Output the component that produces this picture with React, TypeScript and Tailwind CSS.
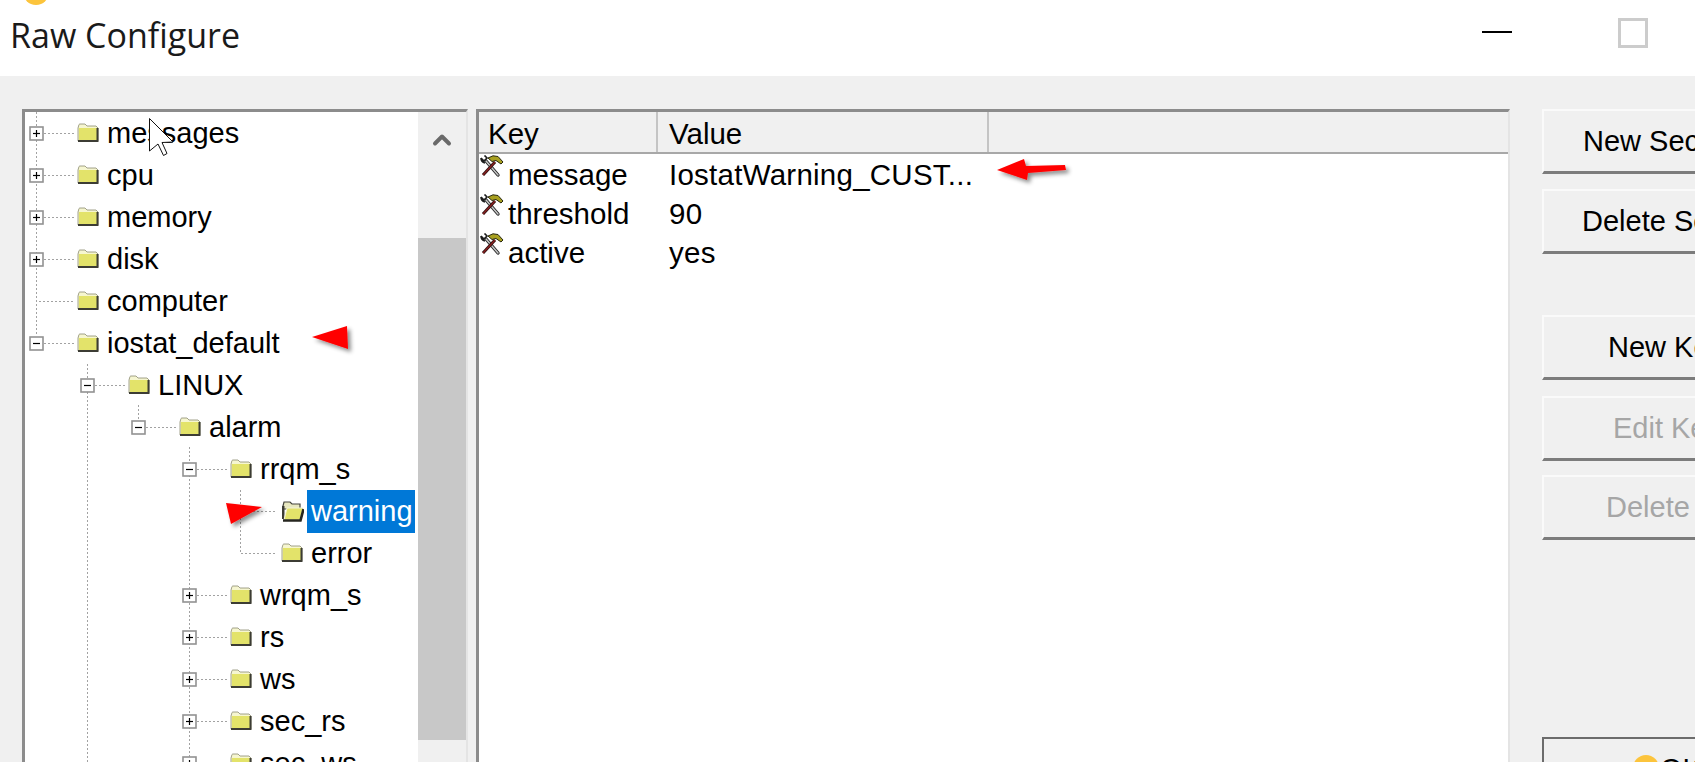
import { ChevronUp } from 'lucide-react';

// ---- data ----

interface TreeRow {
  label: string;
  level: number;
  open?: boolean;
  selected?: boolean;
}

const ROW_INDENT = ['pl-[52px]', 'pl-[103px]', 'pl-[154px]', 'pl-[205px]', 'pl-[256px]'];

const TREE_ROWS: TreeRow[] = [
  { label: 'messages', level: 0 },
  { label: 'cpu', level: 0 },
  { label: 'memory', level: 0 },
  { label: 'disk', level: 0 },
  { label: 'computer', level: 0 },
  { label: 'iostat_default', level: 0 },
  { label: 'LINUX', level: 1 },
  { label: 'alarm', level: 2 },
  { label: 'rrqm_s', level: 3 },
  { label: 'warning', level: 4, open: true, selected: true },
  { label: 'error', level: 4 },
  { label: 'wrqm_s', level: 3 },
  { label: 'rs', level: 3 },
  { label: 'ws', level: 3 },
  { label: 'sec_rs', level: 3 },
  { label: 'sec_ws', level: 3 },
];

// box positions in the tree: [center x, center y, expanded]
const TREE_BOXES: [number, number, boolean][] = [
  [11, 21, false],
  [11, 63, false],
  [11, 105, false],
  [11, 147, false],
  [11, 231, true],
  [62, 273, true],
  [113, 315, true],
  [164, 357, true],
  [164, 483, false],
  [164, 525, false],
  [164, 567, false],
  [164, 609, false],
  [164, 651, false],
];

const KEY_ROWS = [
  { key: 'message', value: 'IostatWarning_CUST...' },
  { key: 'threshold', value: '90' },
  { key: 'active', value: 'yes' },
];

// ---- drawings ----

function Folder({ open }: { open?: boolean }) {
  if (open) {
    return (
      <svg width="23" height="21" viewBox="0 0 23 21" className="shrink-0">
        <path d="M2 5 L3 1 H9 L11 3 H19 V8 H2 Z" fill="#e8e8c0" stroke="#44443c" strokeWidth="1.2" />
        <path d="M1 18 V5 L3.5 5 V18 Z" fill="#3c3c34" />
        <path d="M6 7 H22 L19 19 H3 Z" fill="#e3e36a" stroke="#f4f4d8" strokeWidth="1" />
        <path d="M2 19.5 H19.5 L22.5 8" fill="none" stroke="#26261f" strokeWidth="2.6" />
      </svg>
    );
  }
  return (
    <svg width="22" height="20" viewBox="0 0 22 20" className="shrink-0">
      <path d="M1 5 L2 1.5 Q2.5 1 3 1 H8 L10 3 H19 L21 5 V18 H1 Z" fill="#f6f6d0" stroke="#8a8a70" strokeWidth="0.8" />
      <rect x="2" y="5" width="18" height="12" fill="#e3e36a" />
      <path d="M1 18 H20.5 V5" fill="none" stroke="#3c3c34" strokeWidth="2" />
    </svg>
  );
}

function Tools() {
  return (
    <svg width="25" height="25" viewBox="0 0 25 25" className="shrink-0">
      <path d="M6 6 L18 20" stroke="#2a2a2a" strokeWidth="3.4" strokeLinecap="round" />
      <path d="M6 6 L18 20" stroke="#c8c8c8" strokeWidth="1.4" strokeLinecap="round" />
      <path d="M1 3 L4 6 L7 3 L4.5 0.5 M1 3 Q1 7 5 8" fill="none" stroke="#1c1c1c" strokeWidth="1.6" />
      <path d="M3 20 L15 7" stroke="#2c1010" strokeWidth="3" />
      <path d="M3 20 L15 7" stroke="#8a2020" strokeWidth="1.3" />
      <path d="M8 3 L13 0.8 L18 1.5 L23 7 L21 9 L16 5.5 L12 6.5 Z" fill="#a8a020" stroke="#26260e" strokeWidth="1" />
    </svg>
  );
}

function TreeLines() {
  const dot = { stroke: '#a2a2a2', strokeWidth: 1, strokeDasharray: '2 2' };
  return (
    <svg width="393" height="650" className="pointer-events-none absolute left-0 top-0">
      <line x1="11.5" y1="0" x2="11.5" y2="224" {...dot} />
      <line x1="62.5" y1="252" x2="62.5" y2="650" {...dot} />
      <line x1="113.5" y1="293" x2="113.5" y2="308" {...dot} />
      <line x1="164.5" y1="335" x2="164.5" y2="650" {...dot} />
      <line x1="215.5" y1="378" x2="215.5" y2="441" {...dot} />
      <line x1="14" y1="189.5" x2="49" y2="189.5" {...dot} />
      <line x1="216" y1="399.5" x2="252" y2="399.5" {...dot} />
      <line x1="216" y1="441.5" x2="252" y2="441.5" {...dot} />
      {TREE_BOXES.map(([x, y]) => (
        <line key={`${x}-${y}`} x1={x + 8} y1={y + 0.5} x2={x + 38} y2={y + 0.5} {...dot} />
      ))}
      {TREE_BOXES.map(([x, y, expanded]) => (
        <g key={`${x}-${y}-box`}>
          <rect x={x - 6} y={y - 6} width="13" height="13" fill="#fff" stroke="#929292" strokeWidth="1.6" />
          <line x1={x - 3} y1={y + 0.5} x2={x + 4} y2={y + 0.5} stroke="#000" strokeWidth="1.2" />
          {!expanded && <line x1={x + 0.5} y1={y - 3} x2={x + 0.5} y2={y + 4} stroke="#000" strokeWidth="1.2" />}
        </g>
      ))}
    </svg>
  );
}

// red annotation arrows and the mouse pointer lie on top of the window
function Annotations() {
  return (
    <svg width="1695" height="762" className="pointer-events-none absolute left-0 top-0">
      <defs>
        <filter id="soft" x="-30%" y="-30%" width="170%" height="170%">
          <feDropShadow dx="3" dy="3" stdDeviation="2" floodColor="#000" floodOpacity="0.45" />
        </filter>
      </defs>
      <path d="M312 337 L347 326 L348 349 Z" fill="#ff0000" filter="url(#soft)" />
      <path d="M226 503 L262 507 L231 524 Z" fill="#ff0000" filter="url(#soft)" />
      <path d="M997 170 L1024 159 L1026 166 L1065 165 L1066 170 L1028 173 L1027 180 Z" fill="#ff0000" filter="url(#soft)" />
      <path
        d="M149.5 118.5 V151 L158 144 L163.5 155.5 L167 153.5 L162 142.5 L173 142 Z"
        fill="#fff"
        stroke="#111"
        strokeWidth="1"
      />
    </svg>
  );
}

// ---- panels ----

function Tree() {
  return (
    <div className="flex h-full w-[446px] shrink-0 border-l-[3px] border-t-[3px] border-[#8c8c8c] border-r-2 border-r-[#e4e4e4] bg-white">
      <div className="relative w-[393px] shrink-0 overflow-hidden">
        {TREE_ROWS.map((row) => (
          <div key={row.label} className={`flex h-[42px] items-center ${ROW_INDENT[row.level]}`}>
            <Folder open={row.open} />
            <span
              className={`flex h-[43px] items-center whitespace-nowrap pt-[2px] ${
                row.selected ? 'ml-[3px] bg-[#0078d7] pl-1 pr-[2px] text-white' : 'ml-1 px-1 text-black'
              }`}
            >
              {row.label}
            </span>
          </div>
        ))}
        <TreeLines />
      </div>
      <div className="flex w-[48px] shrink-0 flex-col bg-[#f0f0f0]">
        <div className="flex h-[126px] shrink-0 justify-center pt-[14px] text-[#6a6a6a]">
          <ChevronUp size={28} strokeWidth={3.4} />
        </div>
        <div className="h-[502px] shrink-0 bg-[#c8c8c8]" />
      </div>
    </div>
  );
}

function KeyList() {
  return (
    <div className="ml-[8px] flex h-full w-[1034px] shrink-0 flex-col border-l-[3px] border-t-[3px] border-[#8c8c8c] border-r-2 border-r-[#e4e4e4] bg-white text-[29.5px]">
      <div className="mb-[2px] flex h-[42px] shrink-0 border-b-2 border-[#a8a8a8] bg-[#f0f0f0]">
        <div className="flex w-[179px] items-center border-r-2 border-[#c4c4c4] pl-[9px] pt-[4px]">Key</div>
        <div className="flex w-[331px] items-center border-r-2 border-[#c4c4c4] pl-[11px] pt-[4px]">Value</div>
      </div>
      {KEY_ROWS.map((row) => (
        <div key={row.key} className="flex h-[39px] items-center">
          <div className="flex w-[179px] items-center gap-[3px] pl-[1px]">
            <span className="-mt-[17px]">
              <Tools />
            </span>
            <span>{row.key}</span>
          </div>
          <div className="pl-[11px] tracking-[0.25px]">{row.value}</div>
        </div>
      ))}
    </div>
  );
}

function Button({
  label,
  className,
  disabled,
}: {
  label: string;
  className: string;
  disabled?: boolean;
}) {
  return (
    <button
      className={`flex h-[65px] w-[244px] shrink-0 items-center whitespace-nowrap border-2 border-[#fafafa] border-b-[3px] border-b-[#7c7c7c] bg-[#f0f0f0] pt-[2px] ${
        disabled ? 'text-[#a6a6a6]' : 'text-black'
      } ${className}`}
    >
      {label}
    </button>
  );
}

export default function App() {
  return (
    <div className="relative flex h-[762px] w-[1695px] flex-col overflow-hidden bg-[#f0f0f0] font-['Liberation_Sans',Arial,sans-serif] text-[29px] text-black">
      <header className="flex h-[76px] shrink-0 items-center bg-white pl-[10px]">
        <span className="-translate-y-[3px] font-['Open_Sans',sans-serif] text-[34px] text-[#1a1a1a]">Raw Configure</span>
        <div className="ml-auto mr-[106px] h-[2px] w-[30px] -translate-y-[6px] bg-black" />
        <div className="mr-[47px] h-[30px] w-[30px] -translate-y-[5px] border-[3px] border-[#cccccc]" />
      </header>

      <main className="flex min-h-0 flex-1 pl-[22px] pt-[33px]">
        <Tree />
        <KeyList />
        <div className="ml-[32px] flex w-[244px] shrink-0 flex-col">
          <Button label="New Section" className="pl-[39px]" />
          <Button label="Delete Section" className="mt-[15px] pl-[38px]" />
          <Button label="New Key" className="mt-[61px] pl-[64px]" />
          <Button label="Edit Key" disabled className="mt-[16px] pl-[69px]" />
          <Button label="Delete Key" disabled className="mt-[14px] pl-[62px]" />
          <button className="mt-[197px] flex h-[65px] w-[244px] shrink-0 items-center border-2 border-[#6c6c6c] bg-[#f0f0f0] pl-[116px]">
            OK
          </button>
        </div>
      </main>

      <Annotations />
      <div className="absolute left-[23px] top-[-21px] h-[26px] w-[26px] rounded-full bg-[#fcc43c]" />
      <div className="absolute left-[1633px] top-[755px] h-[26px] w-[26px] rounded-full bg-[#fcc43c]" />
    </div>
  );
}
